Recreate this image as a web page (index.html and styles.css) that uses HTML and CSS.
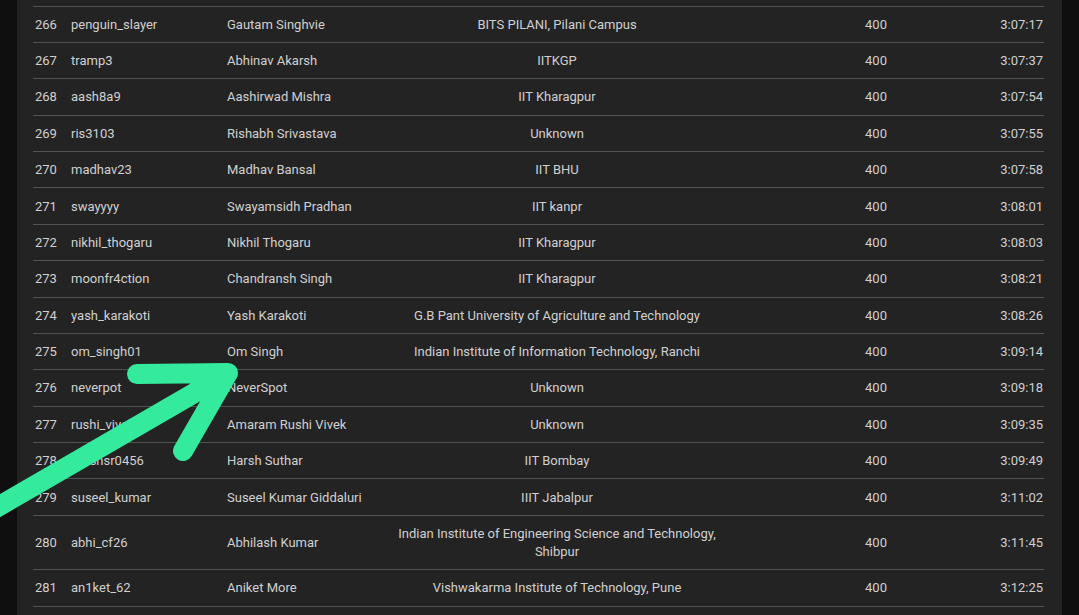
FILE: index.html
```html
<!DOCTYPE html>
<html lang="en">
<head>
    <meta charset="UTF-8">
    <meta name="viewport" content="width=device-width, initial-scale=1.0">
    <title>Standings</title>
    <link rel="stylesheet" href="styles.css">
</head>
<body>
    <div class="panel">
        <div class="standings">
            <div class="row"><span>266</span><span>penguin_slayer</span><span>Gautam Singhvie</span><span class="inst">BITS PILANI, Pilani Campus</span><span class="score">400</span><span class="time">3:07:17</span></div>
            <div class="row"><span>267</span><span>tramp3</span><span>Abhinav Akarsh</span><span class="inst">IITKGP</span><span class="score">400</span><span class="time">3:07:37</span></div>
            <div class="row"><span>268</span><span>aash8a9</span><span>Aashirwad Mishra</span><span class="inst">IIT Kharagpur</span><span class="score">400</span><span class="time">3:07:54</span></div>
            <div class="row"><span>269</span><span>ris3103</span><span>Rishabh Srivastava</span><span class="inst">Unknown</span><span class="score">400</span><span class="time">3:07:55</span></div>
            <div class="row"><span>270</span><span>madhav23</span><span>Madhav Bansal</span><span class="inst">IIT BHU</span><span class="score">400</span><span class="time">3:07:58</span></div>
            <div class="row"><span>271</span><span>swayyyy</span><span>Swayamsidh Pradhan</span><span class="inst">IIT kanpr</span><span class="score">400</span><span class="time">3:08:01</span></div>
            <div class="row"><span>272</span><span>nikhil_thogaru</span><span>Nikhil Thogaru</span><span class="inst">IIT Kharagpur</span><span class="score">400</span><span class="time">3:08:03</span></div>
            <div class="row"><span>273</span><span>moonfr4ction</span><span>Chandransh Singh</span><span class="inst">IIT Kharagpur</span><span class="score">400</span><span class="time">3:08:21</span></div>
            <div class="row"><span>274</span><span>yash_karakoti</span><span>Yash Karakoti</span><span class="inst">G.B Pant University of Agriculture and Technology</span><span class="score">400</span><span class="time">3:08:26</span></div>
            <div class="row"><span>275</span><span>om_singh01</span><span>Om Singh</span><span class="inst">Indian Institute of Information Technology, Ranchi</span><span class="score">400</span><span class="time">3:09:14</span></div>
            <div class="row"><span>276</span><span>neverpot</span><span>NeverSpot</span><span class="inst">Unknown</span><span class="score">400</span><span class="time">3:09:18</span></div>
            <div class="row"><span>277</span><span>rushi_vivek</span><span>Amaram Rushi Vivek</span><span class="inst">Unknown</span><span class="score">400</span><span class="time">3:09:35</span></div>
            <div class="row"><span>278</span><span>harshsr0456</span><span>Harsh Suthar</span><span class="inst">IIT Bombay</span><span class="score">400</span><span class="time">3:09:49</span></div>
            <div class="row"><span>279</span><span>suseel_kumar</span><span>Suseel Kumar Giddaluri</span><span class="inst">IIIT Jabalpur</span><span class="score">400</span><span class="time">3:11:02</span></div>
            <div class="row"><span>280</span><span>abhi_cf26</span><span>Abhilash Kumar</span><span class="inst">Indian Institute of Engineering Science and Technology, Shibpur</span><span class="score">400</span><span class="time">3:11:45</span></div>
            <div class="row"><span>281</span><span>an1ket_62</span><span>Aniket More</span><span class="inst">Vishwakarma Institute of Technology, Pune</span><span class="score">400</span><span class="time">3:12:25</span></div>
        </div>
    </div>

    <!-- hand drawn marker pointing at row 275 -->
    <svg class="marker" width="1079" height="615" viewBox="0 0 1079 615">
        <path d="M -30 523 L 222 377 M 137 374 L 228 373 L 183 451" fill="none" stroke="#34ea9c" stroke-width="20" stroke-linecap="round" stroke-linejoin="round"/>
    </svg>
</body>
</html>
```

FILE: styles.css
```css
html, body {
    margin: 0;
    height: 100%;
    overflow: hidden;
}

body {
    background-color: #0f0f0f;
    font-family: Roboto, "Liberation Sans", Arial, sans-serif;
    font-size: 13px;
    color: #d0d0d0;
}

.panel {
    width: 1045px;
    height: 100%;
    margin-left: 17px;
    padding: 5.5px 18px 0 16px;
    box-sizing: border-box;
    background-color: #242323;
}

.standings {
    border-top: 1px solid #525252;
}

.row {
    display: grid;
    grid-template-columns: 36px 156px 165px 330px 248px 1fr;
    align-items: center;
    padding: 9.2px 1px 8.2px 2px;
    line-height: 18px;
    border-bottom: 1px solid #525252;
}

.inst {
    text-align: center;
}

.score {
    padding-left: 60px;
    text-align: center;
}

.time {
    text-align: right;
}

.marker {
    position: absolute;
    top: 0;
    left: 0;
    pointer-events: none;
}
```
